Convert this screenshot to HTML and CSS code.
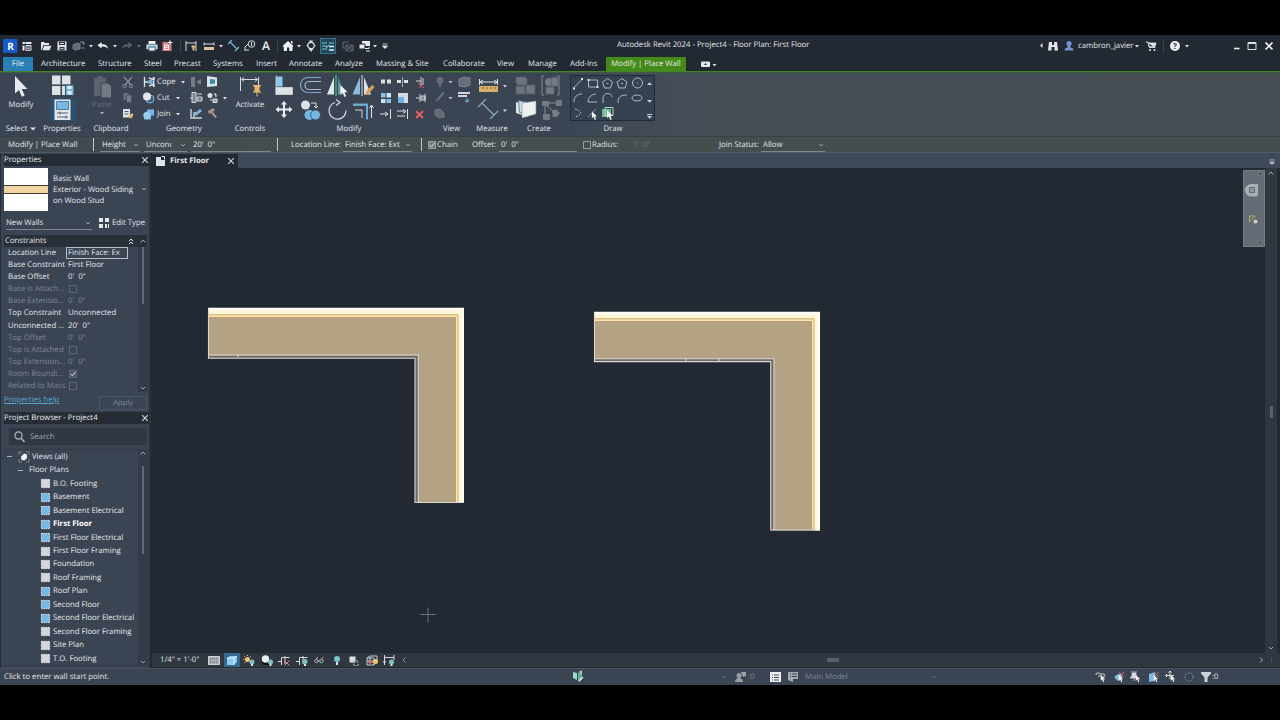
FILE: index.html
```html
<!DOCTYPE html>
<html lang="en">
<head>
<meta charset="utf-8">
<title>Autodesk Revit 2024</title>
<link rel="stylesheet" href="styles.css">
</head>
<body>
<svg class="defs" width="0" height="0">
  <defs>
    <symbol id="caret" viewBox="0 0 6 14"><path d="M1 6h4L3 8.5z" fill="#dfe3e8"/></symbol>
    <symbol id="chev" viewBox="0 0 8 8"><path d="M2 3l2 2 2-2" fill="none" stroke="#9aa3ad" stroke-width="1"/></symbol>
    <symbol id="chevup" viewBox="0 0 8 8"><path d="M1.5 5.5L4 3l2.5 2.5" fill="none" stroke="#a4acb6" stroke-width="1"/></symbol>
    <symbol id="close" viewBox="0 0 8 8"><path d="M1.2 1.2l5.6 5.6M6.8 1.2L1.2 6.8" stroke="#d5d9de" stroke-width="1.1"/></symbol>
    <symbol id="cursor" viewBox="0 0 8 10"><path d="M1 0v8l2-1.6L4.3 10l1.5-.7L4.4 6H7z" fill="#f1f3f5"/></symbol>
    <symbol id="plan" viewBox="0 0 12 12"><rect x="1.5" y="1.5" width="9" height="9" fill="currentColor" stroke="#e9edf0" stroke-width="1" stroke-dasharray="1.5 .8"/></symbol>
    <symbol id="box" viewBox="0 0 8 8"><path d="M.5.5h7v7h-7z" fill="none" stroke="currentColor" stroke-width=".8"/></symbol>
    <symbol id="checked" viewBox="0 0 8 8"><path d="M.5.5h7v7h-7z" fill="currentColor" fill-opacity=".45" stroke="currentColor" stroke-width=".8"/><path d="M1.7 4l1.7 1.7 3-3.6" fill="none" stroke="#e5e8eb" stroke-width="1"/></symbol>
  </defs>
</svg>
<div class="app">
  <header class="titlebar">
    <div class="qat">
      <svg class="i16" viewBox="3 38 16 16"><rect x="3" y="39" width="14.5" height="14" rx="1" fill="#1858c8"/><text x="7.2" y="49.8" class="logo-r">R</text></svg>
      <svg class="i16" viewBox="0 0 16 16"><path d="M3.5 4h3v2h-3zM3.5 7.500h2v5h-2zM7 4h5.500v2H7z" fill="#e6e9ed"/><path d="M7 7.500h5v4.800H7zM8.300 9h2.400M8.300 10.700h2.400" fill="none" stroke="#e6e9ed"/></svg>
      <svg class="i16" viewBox="0 0 16 16"><path d="M3 12V4h3l1 1h4v2H5.500L3.700 12zM4.500 12.200L6.200 7.800h7.300l-2 4.400z" fill="#e3e7eb"/></svg>
      <svg class="i16" viewBox="0 0 16 16"><path d="M3.500 3.500h9v9h-9z" fill="#dfe3e7"/><path d="M5 4h6v3H5zM5.500 9h5v3.500h-5z" fill="#2a313c"/><path d="M6 5.500h4M6.500 10.700h3" stroke="#dfe3e7"/></svg>
      <svg class="i16" viewBox="0 0 16 16"><path d="M2 7l4-2 3 1v5l-4 1-3-1zM9 4h4v3M10 10h4" fill="#636c77" stroke="#737c87"/></svg>
      <svg class="caret"><use href="#caret"/></svg>
      <svg class="i16" viewBox="0 0 16 16"><path d="M2.500 7.200L6.600 4v2.300c4 0 6.200 1.300 6.500 4.500-1.500-2-3-2.400-6.500-2.400v2.200z" fill="#eceff2"/></svg>
      <svg class="caret"><use href="#caret"/></svg>
      <svg class="i16" viewBox="0 0 16 16"><path d="M13.500 7.200L9.400 4v2.300c-4 0-6.200 1.300-6.500 4.500 1.500-2 3-2.400 6.500-2.400v2.200z" fill="#59616c"/></svg>
      <svg class="caret dim"><use href="#caret"/></svg>
      <svg class="i16" viewBox="0 0 16 16"><path d="M4.500 3h7v3h-7zM2.500 6.500h11v4.700h-11z" fill="#e9ecef"/><path d="M4.800 9h6.400v4H4.800z" fill="#e9ecef" stroke="#39566c"/><path d="M3 8h10" stroke="#62b6e4"/></svg>
      <svg class="i16" viewBox="0 0 16 16"><path d="M2.500 4h6v2h3v7h-9z" fill="#d87883"/><path d="M4.500 7h4v4.500h-4zM4.500 9.200h4" fill="none" stroke="#fff"/><path d="M10 2.500v4M8 4.500h4.500" stroke="#fff" stroke-width="1.200"/></svg>
      <i class="vsep"></i>
      <svg class="i16" viewBox="0 0 16 16"><path d="M3 3v10M13 3v10M3 5h10" stroke="#cdd5dc"/><path d="M8.500 7.500h4v2h-1v3h-2v-3h-1z" fill="#e1bd76"/></svg>
      <svg class="i16" viewBox="0 0 16 16"><path d="M3 4.500v3M13 4.500v3M3 6h10" stroke="#d8dde2"/><path d="M3 9h10v3H3z" fill="#dfc39a"/></svg>
      <svg class="caret"><use href="#caret"/></svg>
      <svg class="i16" viewBox="0 0 16 16"><path d="M4 4l7 7M2 6l4-4M9 13l4-4" stroke="#79bad4" stroke-width="1.100"/></svg>
      <svg class="i16" viewBox="0 0 16 16"><path d="M3 13V9l3-3" fill="none" stroke="#d8dde2"/><circle cx="9.500" cy="6" r="3.300" fill="none" stroke="#d8dde2"/><path d="M9.500 4v4M3 12h4" stroke="#d8dde2"/></svg>
      <svg class="i16" viewBox="0 0 16 16"><text x="4" y="12" class="glyph-a">A</text></svg>
      <i class="vsep"></i>
      <svg class="i16" viewBox="0 0 16 16"><path d="M2.500 8L8 3l5.500 5-1 .8V13H9.300V9.500H7V13H3.800V8.800z" fill="#eef0f2"/><path d="M11 3h1.500v3L11 5z" fill="#eef0f2"/></svg>
      <svg class="caret"><use href="#caret"/></svg>
      <svg class="i16" viewBox="0 0 16 16"><circle cx="8" cy="7.500" r="3.200" fill="none" stroke="#dfe3e7" stroke-width="1.200"/><path d="M3 7.500h2M11 7.500h2M6.300 2.800h3.400L8 4.600zM6 11h4l-2 2.500z" fill="#dfe3e7" stroke="#dfe3e7" stroke-width=".6"/></svg>
      <svg class="i16 on" viewBox="0 0 16 16"><path d="M2 5h5M9 5h5M2 8h5M2 11h5" stroke="#79c2df"/><path d="M9 8.500h5M9 12h5" stroke="#e5f0f4" stroke-width="1.600"/><path d="M6 10l3-3" stroke="#aed7e5"/></svg>
      <svg class="i16" viewBox="0 0 16 16"><path d="M3 4h6M3 4v6h3M6 7h7v6H6zM7 8l5 4M12 8l-5 4" fill="none" stroke="#5a626c" stroke-width="1.200"/></svg>
      <svg class="i16" viewBox="0 0 16 16"><path d="M5 3h8v5H5z" fill="#e7eaed"/><path d="M2 6h6v5H2z" fill="#e7eaed" stroke="#242b35"/><path d="M8 10.500h4V9M9 13h4" fill="none" stroke="#e7eaed"/></svg>
      <svg class="caret"><use href="#caret"/></svg>
      <svg class="i16" viewBox="0 0 16 16"><path d="M2.500 6h5M2.500 8h5L5 10.500z" fill="#e7eaed" stroke="#e7eaed" stroke-width=".8"/></svg>
    </div>
    <div class="wintitle">Autodesk Revit 2024 - Project4 - Floor Plan: First Floor</div>
    <div class="account">
      <svg class="i16" viewBox="0 0 16 16"><path d="M9.500 5v5L7 7.500z" fill="#dfe3e7"/></svg>
      <svg class="i16" viewBox="0 0 16 16"><path d="M4 4h3v3h2V4h3l1 8.500H9.500V9h-3v3.500H3z" fill="#e3e7eb"/></svg>
      <svg class="i16" viewBox="0 0 16 16"><circle cx="8" cy="5.500" r="2.600" fill="#7293d8"/><path d="M3.500 12.500c0-2 1.500-2.700 3.200-3V8h2.600v1.500c1.700.3 3.200 1 3.200 3z" fill="#7293d8"/></svg>
      <span>cambron_javier</span>
      <svg class="caret"><use href="#caret"/></svg>
      <svg class="i16" viewBox="0 0 16 16"><path d="M3 4h2l1.500 5.500h6M5.500 5h7.500l-1 3.300-6 .7z" fill="#e3e7eb" stroke="#e3e7eb" stroke-width=".8"/><circle cx="7" cy="12" r="1" fill="#e3e7eb"/><circle cx="11.500" cy="12" r="1" fill="#e3e7eb"/></svg>
      <i class="vsep"></i>
      <svg class="i16" viewBox="0 0 16 16"><circle cx="8" cy="8" r="5" fill="#edf0f3"/><text x="6" y="11" class="glyph-q">?</text></svg>
      <svg class="caret"><use href="#caret"/></svg>
      <svg class="i16" viewBox="0 0 16 16"><path d="M5 10.500h5.500" stroke="#edf0f3" stroke-width="1.600"/></svg>
      <svg class="i16" viewBox="0 0 16 16"><path d="M4 4.500h8v7H4zM4 5.500h8" fill="none" stroke="#dce0e4"/></svg>
      <svg class="i16" viewBox="0 0 16 16"><path d="M4.500 4.500l7 7M11.500 4.500l-7 7" stroke="#f4f5f6" stroke-width="1.700"/></svg>
    </div>
  </header>

  <nav class="tabs">
    <span class="file">File</span><span>Architecture</span><span>Structure</span><span>Steel</span><span>Precast</span><span>Systems</span><span>Insert</span><span>Annotate</span><span>Analyze</span><span>Massing &amp; Site</span><span>Collaborate</span><span>View</span><span>Manage</span><span>Add-Ins</span><span class="active">Modify | Place Wall</span>
    <svg width="20" height="14" viewBox="0 0 20 14"><rect x="3" y="4.500" width="9" height="5.500" rx="1" fill="#e3e7eb"/><path d="M6 8l1.500-2L9 8z" fill="#28303a"/><path d="M14.500 7h4l-2 2.300z" fill="#e3e7eb"/></svg>
  </nav>

  <section class="ribbon">
    <div class="panel">
      <div class="big"><svg width="38" height="25" viewBox="2 73 38 25"><path d="M15 75v17.500l4-3.500 2.800 6.800 2.900-1.300-2.900-6.500h5.500z" fill="#e6eaed"/></svg><b>Modify</b></div>
      <h4>Select <svg width="6" height="6"><path d="M0 1.500h6L3 4.500z" fill="#dfe3e7"/></svg></h4>
    </div>
    <div class="panel">
      <svg width="44" height="49" viewBox="40 73 44 49"><rect x="50" y="97" width="26" height="23" fill="#2c5170"/><path d="M52 74.500h8.500v9H52zM62 74.500h8.500v9H62zM52 85h8.500v9H52zM62 85h7v9h-7z" fill="#dfe2e5"/><path d="M65 83.500h8.500v11H65z" fill="#2d5873"/><path d="M66 84.500h7.500v9.500H66z" fill="#79b5d8"/><path d="M67.500 85h4v3h-4zM67.500 90h4v3.500h-4z" fill="#e7edf1"/><path d="M54.500 98.500h16v20.500h-16z" fill="#e4e8ea"/><path d="M56.500 100.500h12v8h-12z" fill="#75b9e2" stroke="#386986" stroke-width=".8"/><path d="M57 112h11M57 116h11M60 110.500v3M66 114.500v3" stroke="#52606c"/></svg>
      <h4>Properties</h4>
    </div>
    <div class="panel">
      <div class="split clip">
        <div class="big off"><svg width="36" height="25" viewBox="84 73 36 25"><path d="M94 77h3l1-2h4l1 2h3v18H94z" fill="#5b636e"/><path d="M101 82h7l3.500 3.500V97H101z" fill="#737a83" stroke="#3b4453"/></svg><b>Paste</b><svg class="under" width="6" height="5"><path d="M1 1h4L3 3.500z" fill="#aeb4bc"/></svg></div>
        <svg width="18" height="49" viewBox="120 73 18 49"><path d="M124 76l7 8M132 76l-7 8" stroke="#858c95" stroke-width="1.300"/><circle cx="124.500" cy="85" r="1.700" fill="none" stroke="#858c95"/><circle cx="131" cy="85" r="1.700" fill="none" stroke="#858c95"/><path d="M123.500 92h5v7h-5z" fill="#666e79"/><path d="M126.500 94h5v7.500h-5z" fill="#747c86" stroke="#3b4453" stroke-width=".6"/><path d="M123 108h7v8.500h-7z" fill="#dfe3e6"/><path d="M124.500 110.500h4M124.500 113h4" stroke="#56616d"/><path d="M128 116l4-4 1.500 1.500-2 4z" fill="#d9c06f"/></svg>
      </div>
      <h4>Clipboard</h4>
    </div>
    <div class="panel">
      <div class="split geo">
        <svg width="19" height="49" viewBox="137 73 19 49"><path d="M143.500 76v10M143.500 81h4M148 77l5 2v-3M148 85l5-2v3M152.500 76v10" stroke="#dce2e6" stroke-width="1.400" fill="none"/><path d="M147.500 79h4v4h-4z" fill="#73b4dc"/><circle cx="149" cy="98" r="4" fill="#3b5c76" stroke="#77b7dc"/><circle cx="146" cy="95.500" r="4" fill="#e4e8eb"/><path d="M143 112h3v-3.500h7v6h-3v4h-7z" fill="#75b8e4"/><circle cx="146" cy="114.500" r="3.700" fill="#98ccec"/></svg>
        <div class="drops"><span>Cope</span><svg class="caret"><use href="#caret"/></svg><span>Cut</span><svg class="caret near"><use href="#caret"/></svg><span>Join</span><svg class="caret near"><use href="#caret"/></svg></div>
        <svg width="44" height="49" viewBox="186 73 44 49"><path d="M191 76h4v10h-4zM201 78l-5 3 5 3z" fill="#747c86"/><path d="M207 75l10 1.500v8.500l-10 1z" fill="#dce4e9"/><path d="M210 78l5 .5v4l-5 .5z" fill="#398cad"/><path d="M192 91.500h4v10h-4zM197 93h5M197 96h5v4h-5zM190 97h3" stroke="#cfd5da" fill="#7b858f"/><circle cx="210" cy="94.500" r="2.500" fill="#dce2e6"/><path d="M210 99h2M213 98h4v3.500h-4zM214 93h2v3" stroke="#dce2e6" fill="#92a4b0"/><path d="M223 96h4l-2 2.500z" fill="#dce2e6"/><path d="M191 108v9h11M194 117v-5h3" stroke="#cbd4da" stroke-width="1.400" fill="none"/><path d="M194 113l6-5 2 2-6 5z" fill="#79b6df"/><path d="M208 110l5-3 2 2-2 2 4 5-2 1-4-5-2 1z" fill="#a69088"/></svg>
      </div>
      <h4>Geometry</h4>
    </div>
    <div class="panel">
      <div class="big"><svg width="40" height="25" viewBox="230 73 40 25"><path d="M240.500 76v14M258.500 76v8M242 78.500h15M244 76.500l-2.500 2 2.500 2M255 76.500l2.500 2-2.500 2" stroke="#d5dbe1" fill="none"/><path d="M253 84h8v1.500h-1.500v4l2 2h-4v4h-1v-4h-4l2-2v-4H253z" fill="#e4b66c"/></svg><b>Activate</b></div>
      <h4>Controls</h4>
    </div>
    <div class="panel">
      <svg width="158" height="49" viewBox="270 73 158 49">
        <path d="M276 75.500h6.500v10H276z" fill="#8bc7ea"/><path d="M276 86.500h16.500v7H276zM276 74.500v19.500" fill="#dce1e5" stroke="#dce1e5" stroke-width=".7"/>
        <path d="M321 76.500h-13a7.500 7.500 0 0 0 0 15h13" fill="none" stroke="#7fa6c6" stroke-width="1.200"/><path d="M321 80.500h-12a4 4 0 0 0 0 8h12" fill="none" stroke="#aab7c4" stroke-width="1.200"/>
        <path d="M334 76v17.500h-7z" fill="#e3e7e9"/><path d="M336 74v21" stroke="#45af68" stroke-width="1.500"/><path d="M338 76v17.500h6.500z" fill="#5f8faf"/><use href="#cursor" x="339" y="84" width="10" height="12"/>
        <path d="M360 76v17.500h-7.500z" fill="#88bee2"/><path d="M362 74v21" stroke="#d8dee3"/><path d="M364 76v17.500h7z" fill="#dce1e5"/><path d="M366 91l6-7 2.500 2-6 7-3 1z" fill="#dc9f52"/>
        <path d="M284 100l3 3.500h-2v4h4v-2l3.500 3-3.500 3v-2h-4v4h2l-3 3.500-3-3.500h2v-4h-4v2l-3.500-3 3.500-3v2h4v-4h-2z" fill="#e9edf0"/>
        <circle cx="305.500" cy="104" r="4.500" fill="#dce1e5"/><path d="M311 102h5v5M314 105l2 2 2-2" fill="none" stroke="#dce1e5"/><circle cx="309.500" cy="114" r="5" fill="#74b8e2"/><circle cx="315.500" cy="114" r="5" fill="#74b8e2" stroke="#3b4453" stroke-width=".8"/>
        <path d="M335 101.500a8.500 8.500 0 1 0 11 8M336 98.500l4 3-4 3" fill="none" stroke="#d5dbe1" stroke-width="1.200"/>
        <path d="M353 104h13M355 109h7v8" fill="none" stroke="#d0d8de"/><path d="M353 103.500h14v15" fill="none" stroke="#68aed8" stroke-width="2"/><path d="M371.500 117v-12M369.500 107l2-3 2 3" stroke="#e1e5e8" fill="none"/>
        <path d="M381 78.500h4v4h-4zM387 78.500h4v4h-4zM397 79h4v3h-4zM404 79h4v3h-4z" fill="#dbe1e5"/><path d="M402.500 76v10" stroke="#9eabb5"/><path d="M416 80h5M421 76v9M423 77v7" stroke="#cbd1d6"/><path d="M418 82l6 5M424 82l-5 5" stroke="#dc5c69"/>
        <path d="M381 92h4.500v4.500H381zM386.500 98h4.500v4h-4.500z" fill="#83c3eb"/><path d="M386.500 92h4.500v4.500h-4.500zM381 98h4.500v4H381z" fill="#cae5f4"/><path d="M398 92h10v10h-10z" fill="#d3dde3"/><path d="M398 96h6v6h-6z" fill="#69b4e2"/><path d="M416 97h4M420 93v8M421 95h4v4h-4zM425 93v8" stroke="#cbd1d6" fill="#748493"/>
        <path d="M380 113h8M385 111l3 2-3 2M390.500 108v10M397 110h8M397 115h8M403 108.500l3 2-3 2M407.500 108v10" stroke="#dbe1e5" fill="none"/><path d="M416 110l7 7M423 110l-7 7" stroke="#eb5f5b" stroke-width="1.800"/>
      </svg>
      <h4>Modify</h4>
    </div>
    <div class="panel">
      <svg width="47" height="49" viewBox="428 73 47 49"><circle cx="440" cy="79.500" r="3.500" fill="#646d78"/><path d="M439 83h2v3h-2z" fill="#646d78"/><path d="M448.500 80h4l-2 2.500zM448.500 96h4l-2 2.500z" fill="#b9c0c8"/><path d="M459 78l5-2 6 1v7l-5 2-6-1z" fill="#656e79" stroke="#7a828c"/><path d="M435 101l2-3 6-7 1.500 1-6 7z" fill="#707882"/><path d="M458 92h12M458 95h9" stroke="#cfd6dc" stroke-width="1.800"/><path d="M467 97v4M465 99l2 2.500 2-2.500" stroke="#6dbbe5" fill="none"/><path d="M435 109l5-1 4 4v4l-5 1-4-3z" fill="#606974" stroke="#737b86"/></svg>
      <h4>View</h4>
    </div>
    <div class="panel">
      <svg width="34" height="49" viewBox="475 73 34 49"><path d="M479.500 78v6M497.500 78v6M480 81h17M483 79l-3 2 3 2M494 79l3 2-3 2" stroke="#dfe4e8" fill="none"/><path d="M479 85h19v6h-19z" fill="#d9ae68"/><path d="M483 86v2M487 86v2M491 86v2M495 86v2" stroke="#7c6239"/><path d="M482 102l12 12M478 106l8-8M490 118l8-8" stroke="#85a9c0" stroke-width="1.200"/><path d="M503 84h4l-2 2.500zM503 108.500h4l-2 2.500z" fill="#cfd5db"/></svg>
      <h4>Measure</h4>
    </div>
    <div class="panel">
      <svg width="60" height="49" viewBox="509 73 60 49"><path d="M516 76h9l2 2v6h-9l-2-2zM516 85h9v8h-9zM526 84h9v9h-9z" fill="#6d747d" stroke="#535c68" stroke-width=".7"/><path d="M544 75h-2v19h2M557 75h2v19h-2" stroke="#848b94" fill="none"/><circle cx="549" cy="81" r="4" fill="#737a83"/><path d="M551 77l5-1 2 2v7h-7zM546 86h8v7h-8z" fill="#737a83" stroke="#566"/><path d="M516 101l12 3v12l-12-4z" fill="#dfe4e8"/><path d="M518.500 99.500l14 3v11l-13-2z" fill="#c8e1e8" stroke="#527181" stroke-width=".8"/><path d="M522 102l14 -2v13l-14 4z" fill="#eef0ef" stroke="#7a8994" stroke-width=".6"/><path d="M542 100h7v5h-7zM556 99h6v6h-6zM543 113h7v6h-7zM552 110l4-2 4 4-3 4h-4z" fill="#737a83"/><path d="M549 102h7M545 105v8M547 105l9 8" stroke="#858c95"/></svg>
      <h4>Create</h4>
    </div>
    <div class="panel">
      <svg width="88" height="49" viewBox="569 73 88 49"><path d="M570.500 74.500h84v45h-84z" fill="#354150" stroke="#202b39"/>
        <g fill="none" stroke="#bac4ce" stroke-width=".9"><path d="M573.500 87l9-9M588.500 79h9v7h-9zM607.500 77.500l5 3.500-2 6h-6l-2-6zM622 77.500l5 3.500-2 6h-6l-2-6z"/><circle cx="637.500" cy="82" r="5"/><path d="M637 82h1M606.500 82.500h2M621 82.500h2"/><path d="M574 101c0-5 3-8 8-8M588 101c0-5 4-8 8-8M588 101h9M603 102v-4c0-7 8-7 9-2M618 102c0-6 2-8 9-8"/><ellipse cx="637" cy="97" rx="5" ry="3"/><path d="M575 108l3 1 3 3-3 3-3 1M588 116l8-8" stroke-dasharray="2 1"/></g>
        <path d="M573 86.500h2v2h-2zM581 77h2v2h-2zM587.500 78h2v2h-2zM596.500 85h2v2h-2z" fill="#dce3e8"/><use href="#cursor" x="591" y="110" width="7" height="9"/><path d="M602 108h9v8h-9z" fill="#68b88c"/><path d="M605 106.500h8v8h-8z" fill="none" stroke="#aeddb9"/><use href="#cursor" x="606" y="109" width="8" height="10"/><path d="M647 84h5l-2.500-2.800zM647 99h5l-2.500 2.800zM647 115h5l-2.500 2.800zM647 113h5v1h-5z" fill="#c9d0d6"/></svg>
      <h4>Draw</h4>
    </div>
  </section>

  <section class="options">
    <span>Modify | Place Wall</span><i class="bar"></i>
    <span class="field">Height <svg class="cv"><use href="#chev"/></svg></span>
    <span class="field">Unconı <svg class="cv"><use href="#chev"/></svg></span>
    <span class="field">20'&nbsp; 0"</span><i class="bar"></i>
    <span>Location Line:</span><span class="field loc">Finish Face: Ext <svg class="cv"><use href="#chev"/></svg></span><i class="bar"></i>
    <span class="chk"><svg class="cv"><use href="#checked"/></svg>Chain</span>
    <span>Offset:</span><span class="field">0'&nbsp; 0"</span>
    <span class="chk"><svg class="cv"><use href="#box"/></svg>Radius:</span><span class="field mute">1'&nbsp; 0"</span>
    <span>Join Status:</span><span class="field">Allow <svg class="cv"><use href="#chev"/></svg></span>
  </section>

  <main class="work">
    <aside class="side">
      <div class="head"><span>Properties</span><svg class="cv"><use href="#close"/></svg></div>
      <div class="type">
        <svg width="44" height="45" viewBox="0 0 44 45"><path d="M0 1h44v43H0z" fill="#fff"/><path d="M0 18h44v9H0z" fill="#463e36"/><path d="M0 19h44v7H0z" fill="#f0d5a2"/></svg>
        <p>Basic Wall<br>Exterior - Wood Siding<br>on Wood Stud</p>
        <svg class="cv"><use href="#chev"/></svg>
      </div>
      <div class="filter"><span class="field">New Walls <svg class="cv"><use href="#chev"/></svg></span><svg width="12" height="12" viewBox="0 0 12 12"><path d="M1 1h4v4H1zM7 1h4v4H7zM1 7h4v4H1zM7 7h2v4H7zM10 7h1v4h-1z" fill="#e1e5e8"/></svg><span>Edit Type</span></div>
      <div class="group"><span>Constraints</span><svg class="cv"><path d="M2 4l2-2 2 2M2 7l2-2 2 2" stroke="#e1e5e8" fill="none"/></svg><svg class="cv"><use href="#chevup"/></svg></div>
      <div class="props">
        <div class="grid">
          <span>Location Line</span><span class="edit">Finish Face: Ex</span>
          <span>Base Constraint</span><span>First Floor</span>
          <span>Base Offset</span><span>0'&nbsp; 0"</span>
          <span class="mute">Base is Attach...</span><span class="mute"><svg class="cv"><use href="#box"/></svg></span>
          <span class="mute">Base Extensio...</span><span class="mute">0'&nbsp; 0"</span>
          <span>Top Constraint</span><span>Unconnected</span>
          <span>Unconnected ...</span><span>20'&nbsp; 0"</span>
          <span class="mute">Top Offset</span><span class="mute">0'&nbsp; 0"</span>
          <span class="mute">Top is Attached</span><span class="mute"><svg class="cv"><use href="#box"/></svg></span>
          <span class="mute">Top Extension...</span><span class="mute">0'&nbsp; 0"</span>
          <span class="mute">Room Boundi...</span><span class="mute"><svg class="cv"><use href="#checked"/></svg></span>
          <span class="mute">Related to Mass</span><span class="mute"><svg class="cv"><use href="#box"/></svg></span>
        </div>
        <div class="scroll"><i class="thumb"></i><svg class="cv"><use href="#chev"/></svg></div>
      </div>
      <div class="help"><a>Properties help</a><span class="apply">Apply</span></div>
      <div class="head"><span>Project Browser - Project4</span><svg class="cv"><use href="#close"/></svg></div>
      <div class="search"><svg width="13" height="13" viewBox="0 0 13 13"><circle cx="5.500" cy="5.500" r="3.600" fill="none" stroke="#aeb6bf" stroke-width="1.200"/><path d="M8 8l3.500 4" stroke="#aeb6bf" stroke-width="1.500"/></svg><span>Search</span></div>
      <div class="browser">
        <div class="tree">
          <div class="node top"><i class="minus"></i><svg width="12" height="12" viewBox="0 0 12 12"><path d="M1 4V1h3M8 1h3v3M11 8v3H8M4 11H1V8" fill="none" stroke="#7d8690"/><path d="M3 5.500l3-3 3 1v3.500L6.500 9.500 3.500 9z" fill="#f0f2f4"/></svg><span>Views (all)</span></div>
          <div class="node sub"><i class="minus"></i><span>Floor Plans</span></div>
          <div class="node leaf"><svg class="ic"><use href="#plan"/></svg><span>B.O. Footing</span></div>
          <div class="node leaf blue"><svg class="ic"><use href="#plan"/></svg><span>Basement</span></div>
          <div class="node leaf blue"><svg class="ic"><use href="#plan"/></svg><span>Basement Electrical</span></div>
          <div class="node leaf blue"><svg class="ic"><use href="#plan"/></svg><strong>First Floor</strong></div>
          <div class="node leaf blue"><svg class="ic"><use href="#plan"/></svg><span>First Floor Electrical</span></div>
          <div class="node leaf"><svg class="ic"><use href="#plan"/></svg><span>First Floor Framing</span></div>
          <div class="node leaf"><svg class="ic"><use href="#plan"/></svg><span>Foundation</span></div>
          <div class="node leaf"><svg class="ic"><use href="#plan"/></svg><span>Roof Framing</span></div>
          <div class="node leaf blue"><svg class="ic"><use href="#plan"/></svg><span>Roof Plan</span></div>
          <div class="node leaf blue"><svg class="ic"><use href="#plan"/></svg><span>Second Floor</span></div>
          <div class="node leaf blue"><svg class="ic"><use href="#plan"/></svg><span>Second Floor Electrical</span></div>
          <div class="node leaf"><svg class="ic"><use href="#plan"/></svg><span>Second Floor Framing</span></div>
          <div class="node leaf"><svg class="ic"><use href="#plan"/></svg><span>Site Plan</span></div>
          <div class="node leaf"><svg class="ic"><use href="#plan"/></svg><span>T.O. Footing</span></div>
        </div>
        <div class="scroll"><svg class="cv"><use href="#chevup"/></svg><i class="thumb"></i><svg class="cv"><use href="#chev"/></svg></div>
      </div>
    </aside>

    <section class="doc">
      <div class="doctabs"><div class="doctab"><svg width="12" height="12" viewBox="0 0 12 12"><path d="M1 2h5v3h4v6H1z" fill="#dfe3e7"/><path d="M6.500 1.500h3v3" fill="none" stroke="#dfe3e7"/></svg><strong>First Floor</strong><svg class="cv"><use href="#close"/></svg></div><svg class="cv"><path d="M1 3h6M1.500 5h5L4 7.500z" fill="#bcc4cc" stroke="#bcc4cc" stroke-width=".7"/></svg></div>
      <div class="view">
        <svg class="canvas" width="1113" height="485" viewBox="152 168 1113 485">
          <g>
            <path d="M208 308.500H464V503H415V358H208z" fill="#b3a284"/>
            <path d="M208 311H461V503" fill="none" stroke="#fff6d9" stroke-width="6"/>
            <path d="M462.500 308.500V503M208 309h256" stroke="#fffdf3" stroke-width="2.500"/>
            <path d="M208 315.500H457V503" fill="none" stroke="#e8cf97" stroke-width="3"/>
            <path d="M208 317.500H455.300V503" fill="none" stroke="#c09d67" stroke-width="1"/>
            <path d="M208 314.500H458V503" fill="none" stroke="#d7bf7c" stroke-width=".8"/>
            <path d="M209 316.500H456.500V503" fill="none" stroke="#fff0c5" stroke-width=".7"/>
            <path d="M208 357H416.500V503" fill="none" stroke="#6c6b69" stroke-width="3"/>
            <path d="M208 355H418.300V502.500M208 358.300H415V502.500H464M208.500 309v49M238 355v2" fill="none" stroke="#d8d5cf" stroke-width="1.100"/>
          </g>
          <g>
            <path d="M594 312H820V530.500H771V361.500H594z" fill="#b3a284"/>
            <path d="M594 315H817V530.500" fill="none" stroke="#fff6d9" stroke-width="6"/>
            <path d="M818.500 312V530.500M594 313h226" stroke="#fffdf3" stroke-width="2.500"/>
            <path d="M594 319.500H813V530" fill="none" stroke="#e8cf97" stroke-width="3"/>
            <path d="M594 321.500H811.500V530" fill="none" stroke="#c09d67" stroke-width="1"/>
            <path d="M594 318.500H814V530" fill="none" stroke="#d7bf7c" stroke-width=".8"/>
            <path d="M595 320.500H812.500V530" fill="none" stroke="#fff0c5" stroke-width=".7"/>
            <path d="M594 360.300H772.300V530" fill="none" stroke="#6c6b69" stroke-width="3"/>
            <path d="M594 358.700H774V530M594 361.600H770.700V530H820M594.500 313v49M686 358v3M719 358v3" fill="none" stroke="#d8d5cf" stroke-width="1.100"/>
          </g>
          <path d="M420.500 614.500h15M428 607.500v15" stroke="#747b85" stroke-width=".9"/>
          <path d="M1243 170h22v76h-22z" fill="#656b74"/><path d="M1243.500 170.500h21v76h-21z" fill="none" stroke="#787e86"/><path d="M1256 184h2v11l-2 1.500h-4a6.300 6.300 0 1 1 0-12.500z" fill="#a9aeb7"/><path d="M1249.500 187.500h5v5h-5z" fill="#9298a0" stroke="#62686f"/><path d="M1249.500 222v-6h6l-6 6" fill="none" stroke="#a7ad62"/><circle cx="1255.500" cy="221.500" r="2" fill="#cfd1b0"/><circle cx="1260.500" cy="174" r="1.800" fill="#454b55" stroke="#8d939b" stroke-width=".6"/><circle cx="1260.500" cy="242.500" r="1.800" fill="#454b55" stroke="#8d939b" stroke-width=".6"/>
        </svg>
        <div class="vscroll"><svg class="cv"><use href="#chevup"/></svg><i class="thumb"></i><svg class="cv"><use href="#chev"/></svg></div>
      </div>
      <div class="viewbar">
        <span>1/4" = 1'-0"</span>
        <svg class="i16" viewBox="0 0 16 14"><path d="M2.500 3.500h11v8h-11z" fill="#a8aeb4" stroke="#d0d4d8"/><path d="M4 6h8M4 9h8" stroke="#596571" stroke-dasharray="1 1"/></svg>
        <svg class="i16 lit" viewBox="0 0 16 14"><path d="M3 5l3-2h7v6l-3 3H3z" fill="#8dcaf1"/><path d="M3 5h7v7M10 5l3-2" fill="none" stroke="#e8f5fc"/></svg>
        <svg class="i16" viewBox="0 0 16 14"><circle cx="6.500" cy="6.500" r="2.500" fill="#edc87a"/><path d="M6.500 2v1M2 6.500h1M3.300 3.300l.9.900M9.700 3.300l-.9.900M3.500 10l.9-.9" stroke="#edc87a"/><circle cx="11" cy="9" r="2.500" fill="#80c1c2"/><path d="M10 11h2v2h-2z" fill="#d8ddd9"/></svg>
        <svg class="i16" viewBox="0 0 16 14"><ellipse cx="7.500" cy="9.500" rx="5" ry="2.500" fill="#080c10"/><circle cx="6.500" cy="6" r="3.700" fill="#eceee9"/><circle cx="11.500" cy="9" r="2.500" fill="#80c1c2"/><path d="M10.500 11h2v2h-2z" fill="#d8ddd9"/></svg>
        <svg class="i16" viewBox="0 0 16 14"><path d="M2 8.500h3M5.500 12V4.500h8M9 3v8" stroke="#d7dbdf" fill="none"/><path d="M8.500 7.500l5 5M13.500 7.500l-5 5" stroke="#d67987"/></svg>
        <svg class="i16" viewBox="0 0 16 14"><path d="M2 8.500h3M5.500 12V4.500h8M9 3v8" stroke="#d7dbdf" fill="none"/><circle cx="11" cy="8.500" r="2.500" fill="#80c1c2"/><path d="M10 11h2v2h-2z" fill="#d8ddd9"/></svg>
        <svg class="i16" viewBox="0 0 16 14"><path d="M5 6l2-2M10.500 6l2-2M7 8h2" stroke="#aeb5bc" fill="none"/><circle cx="5.500" cy="8" r="1.700" fill="none" stroke="#aeb5bc"/><circle cx="10.500" cy="8" r="1.700" fill="none" stroke="#aeb5bc"/></svg>
        <svg class="i16" viewBox="0 0 16 14"><circle cx="8" cy="6" r="3" fill="#70c5d0"/><path d="M7 9h2v3H7z" fill="#ccebed"/></svg>
        <svg class="i16" viewBox="0 0 16 14"><path d="M3.500 3.500h6v6h-6z" fill="#dde2e5"/><path d="M7.500 7.500h4l1 5M7.500 8v4.500h5" stroke="#aab3bb" fill="none" stroke-dasharray="1.500 1"/></svg>
        <svg class="i16" viewBox="0 0 16 14"><path d="M3 5l3-2h7v6l-3 3H3zM3 5h7v7M3 8h10M6 4v7" fill="none" stroke="#c5c9ce"/><path d="M4 9h5" stroke="#c76d7c" stroke-width="2"/><circle cx="11.500" cy="8.500" r="2.500" fill="#eac874"/></svg>
        <svg class="i16" viewBox="0 0 16 14"><path d="M3.500 2v10M13 2v5M3.500 4.500H13M2 9h3" fill="none" stroke="#d7dbdf"/><circle cx="10.500" cy="9" r="2.500" fill="#80c1c2"/><path d="M9.500 11h2v2h-2z" fill="#d8ddd9"/></svg>
        <svg class="i16" viewBox="0 0 16 14"><path d="M6.500 4.500L4 7l2.500 2.500" fill="none" stroke="#8f98a1"/></svg>
        <i class="hthumb"></i>
        <svg class="i16" viewBox="0 0 16 14"><path d="M4 4.500L6.500 7 4 9.500" fill="none" stroke="#aeb6be"/><path d="M15 9h1M15 6h1" stroke="#727a84"/></svg>
      </div>
    </section>
  </main>

  <footer class="status">
    <span>Click to enter wall start point.</span>
    <svg class="i16" viewBox="0 0 16 16"><path d="M3 3l4 1v7l-4-2z" fill="#9bd9cc"/><path d="M8 4l4-2v9l-4 2z" fill="#5bb6aa"/><path d="M9 2.500l3-1v4" fill="#dbc97e"/><path d="M9 12l4-4" stroke="#e7ece9" stroke-width="1.500"/></svg>
    <svg class="cv dim"><use href="#chev"/></svg>
    <svg class="i16" viewBox="0 0 16 16"><circle cx="6" cy="6.500" r="2.500" fill="#999fa8"/><path d="M2 13c0-3 2-4 4-4s4 1 4 4zM8 3h5v4l-3 1z" fill="#999fa8"/></svg><span class="mute num">:0</span>
    <svg class="i16" viewBox="0 0 16 16"><path d="M3 3h11v10H3z" fill="#eef0f2"/><path d="M5 6h1M5 8.500h1M5 11h1M7 6h5M7 8.500h5M7 11h5" stroke="#39424f"/></svg>
    <svg class="i16" viewBox="0 0 16 16"><path d="M3 3h10v7H8v3l-5-2z" fill="#a4aab2"/><path d="M5 5h1M7 5h5M5 7.500h1M7 7.500h5" stroke="#3b4453"/></svg>
    <span class="mute">Main Model</span>
    <svg class="cv dim"><use href="#chev"/></svg>
    <svg class="i16" viewBox="0 0 16 16"><path d="M3 6a2 1.500 0 0 1 4-1h3a2 1.500 0 1 1 0 3M5 7h4" fill="none" stroke="#cbd1d6"/><use href="#cursor" x="7" y="5" width="6" height="9"/></svg>
    <svg class="i16" viewBox="0 0 16 16"><path d="M3 8l4-3h4v5l-4 2z" fill="#80bfde"/><path d="M8 3l5 5M13 3L8 8" stroke="#c6717d"/><use href="#cursor" x="7" y="5" width="6" height="9"/></svg>
    <svg class="i16" viewBox="0 0 16 16"><path d="M3 3h6M4 4h4v3l2 2H2l2-2zM6 9v3" fill="#d5dade" stroke="#d5dade" stroke-width=".7"/><use href="#cursor" x="7" y="5" width="6" height="9"/></svg>
    <svg class="i16" viewBox="0 0 16 16"><path d="M3 5l6-2v9l-6 1z" fill="#7bbae1"/><path d="M8 3l5 5M13 3L8 8" stroke="#c6717d"/><use href="#cursor" x="7" y="5" width="6" height="9"/></svg>
    <svg class="i16" viewBox="0 0 16 16"><path d="M7 2v8M3 6.500h8M5.500 3.500L7 2l1.500 1.500M4 5L2.500 6.500 4 8" fill="none" stroke="#d8dee3"/><use href="#cursor" x="7" y="5" width="6" height="9"/></svg>
    <svg class="i16" viewBox="0 0 16 16"><circle cx="8" cy="8" r="4.200" fill="none" stroke="#99a1aa" stroke-dasharray="1.500 1.500"/></svg>
    <svg class="i16" viewBox="0 0 16 16"><path d="M3 3h10v1.500L9.500 8.500V13h-3V8.500L3 4.500z" fill="#cbd4da"/></svg><span>:0</span>
  </footer>
</div>
</body>
</html>
```
FILE: styles.css
```css
* { box-sizing: border-box; }
body {
  margin: 0;
  background: #000;
  color: #e3e7eb;
  font: 7.75px/12px "Open Sans", "Noto Sans", sans-serif;
  text-rendering: geometricPrecision;
}
svg { display: block; flex: none; }
.defs { position: absolute; }
.app {
  width: 1280px;
  height: 720px;
  padding: 35px 0;
  overflow: hidden;
  white-space: nowrap;
  display: flex;
  flex-direction: column;
}
.i16 { width: 16px; height: 16px; }
.cv { width: 8px; height: 8px; }
.caret { width: 6px; height: 14px; }
.dim { opacity: .4; }
.mute { color: #7e8793; }
.vsep { width: 1px; height: 14px; background: #3a424d; }
.logo-r { font: bold 10px "Open Sans", sans-serif; fill: #fff; }
.glyph-a { font: 600 12px "Open Sans", sans-serif; fill: #eef0f2; }
.glyph-q { font: bold 8px "Open Sans", sans-serif; fill: #222933; }

/* Title bar */
.titlebar {
  height: 22px;
  flex: none;
  padding-left: 3px;
  background: #222933;
  display: grid;
  grid-template-columns: 614px 423px 240px;
  align-items: center;
}
.qat {
  display: grid;
  align-items: center;
  grid-template-columns: 16px 19px 16px 17px 17px 7px 17px 7px 17px 8px 16px 20px 3px 18px 17px 8px 16px 16px 19px 3px 16px 7px 17px 20px 17px 15px 8px 16px;
}
.on { background: #234a5c; outline: 1px solid #3a7187; outline-offset: -1px; }
.wintitle { padding-bottom: 3px; }
.account {
  display: grid;
  align-items: center;
  grid-template-columns: 12px 16px 17px 56px 9px 20px 4px 17px 45px 15px 17px 16px;
  margin-left: -7px;
}

/* Ribbon tabs */
.tabs {
  height: 15px;
  flex: none;
  padding-left: 3px;
  background: #222933;
  border-bottom: 1px solid #47822a;
  display: grid;
  line-height: 14px;
  grid-template-columns: 38px 57px 46px 30px 39px 43px 33px 46px 41px 67px 54px 31px 42px 36px 80px 12px 20px;
}
.tabs svg { grid-column: 17; }
.file { width: 30px; background: #2a7fb5; text-align: center; }
.active { background: #438b16; text-align: center; }

/* Ribbon */
.ribbon {
  height: 64px;
  flex: none;
  padding: 1px 0 0 2px;
  border-top: 1px solid #3d5b45;
  background: linear-gradient(90deg, #3b4453 0, #3b4453 560px, #454e56 680px, #474f55 100%);
  display: grid;
  grid-template-columns: 38px 44px 54px 92px 40px 158px 47px 34px 60px 88px;
}
.panel { height: 62px; display: flex; flex-direction: column; }
.panel h4 { margin: -1px 0 0; height: 13px; font-weight: 400; display: flex; justify-content: center; align-items: center; gap: 3px; }
.big { height: 49px; display: flex; flex-direction: column; align-items: center; }
.big b { font-weight: 400; line-height: 12px; }
.big.off { color: #67707b; }
.split { display: grid; height: 49px; }
.clip { grid-template-columns: 36px 18px; }
.geo { grid-template-columns: 19px 29px 44px; }
.drops { display: grid; grid-template-columns: 23px 6px; grid-auto-rows: 16px; align-items: center; }
.near { margin-left: -5px; }

/* Options bar */
.options {
  height: 17px;
  flex: none;
  padding-left: 8px;
  border-top: 1px solid #384047;
  border-bottom: 1px solid #505a62;
  background: linear-gradient(90deg, #3f4750, #444e4f 260px, #444e4f);
  display: grid;
  align-items: center;
  grid-template-columns: 85px 9px 44px 47px 84px 14px 54px 76px 7px 44px 29px 82px 50px 86px 44px 68px;
}
.bar { width: 1px; height: 13px; background: #c4c9cd; }
.field { display: flex; justify-content: space-between; align-items: center; height: 15px; margin-right: 6px; border-bottom: 1px solid #7d868e; }
.options .field { padding-top: 1px; margin-left: -2px; padding-left: 2px; }
.options .loc { margin-right: 9px; }
.field.mute { border-bottom-color: transparent; color: #6d767e; }
.chk { display: flex; align-items: center; gap: 1px; color: #dfe3e7; }
.chk .cv { color: #aab1b8; }

/* Work area */
.work { height: 515px; flex: none; display: grid; grid-template-columns: 152px 1128px; background: #222933; }
.side {
  width: 151px;
  height: 515px;
  padding: 1px 2px 0 3px;
  background: #3b4453;
  border-right: 2px solid #2a313b;
  border-left: 1px solid #252d37;
}
.head { height: 12px; display: flex; justify-content: space-between; align-items: center; background: #252c36; margin-right: -2px; color: #eceef0; }
.type { height: 46px; display: grid; grid-template-columns: 49px 86px 8px; align-items: center; margin-left: 1px; }
.type svg:first-child { margin-left: -1px; }
.type p { margin: 3px 0 0 -1px; line-height: 11px; }
.filter { height: 20px; display: grid; align-items: center; grid-template-columns: 92px 14px 40px; margin-top: 1px; padding-left: 2px; }
.filter .field { height: 14px; }
.group { height: 12px; margin-top: 2px; background: #29303a; display: grid; align-items: center; grid-template-columns: 123px 12px 8px; }
.group span { padding-left: 1px; }
.props { height: 145px; display: grid; grid-template-columns: 136px 8px; }
.grid { display: grid; grid-template-columns: 60px 66px; grid-auto-rows: 12.1px; padding-left: 4px; height: 145px; }
.grid span { height: 12px; display: flex; align-items: center; }
.grid .mute .cv { color: #67717d; margin-left: 1px; }
.grid .edit { width: 62px; height: 12px; border: 1px solid #b7bec6; margin-left: -2px; padding-left: 1px; overflow: hidden; }
.scroll { display: flex; flex-direction: column; justify-content: space-between; background: #343c49; margin-left: -2px; align-items: center; }
.scroll .thumb { width: 2px; height: 57px; background: #606976; }
.help { height: 20px; display: flex; justify-content: space-between; }
.help a { color: #56a5cc; text-decoration: underline; line-height: 17px; }
.apply { width: 48px; height: 14px; margin-top: 4px; border: 1px solid #4a5462; color: #7e8793; text-align: center; }
.search { height: 17px; margin: 4px 0 4px 5px; padding-left: 4px; background: #303844; display: flex; align-items: center; gap: 4px; color: #a0a8b1; }
.browser { height: 217px; display: grid; grid-template-columns: 136px 8px; }
.tree { border-top: 1px solid #333b46; border-bottom: 1px solid #2e3641; height: 217px; overflow: hidden; }
.node { height: 13.48px; display: flex; align-items: center; }
.top { padding-left: 3px; }
.top svg { margin: 0 2px 0 6px; }
.sub { padding-left: 14px; gap: 6px; }
.leaf { padding-left: 36px; gap: 2px; color: #d3d7dc; }
.leaf span { color: #e6e9ec; }
.leaf.blue { color: #76b9e6; }
.leaf strong { color: #fff; }
.ic { width: 11px; height: 11px; }
.minus { width: 5px; height: 1px; background: #a9b1ba; }
.browser .thumb { height: 88px; margin-bottom: 95px; }

/* Drawing view */
.doc { display: grid; grid-template-rows: 15px 485px 15px; }
.doctabs { background: #3f4958; display: flex; justify-content: space-between; align-items: center; padding: 1px 4px 0 0; }
.doctab { width: 86px; height: 14px; background: #222933; display: grid; grid-template-columns: 15px 57px 8px; align-items: center; padding-left: 3px; }
.doctab strong, .leaf strong { font-weight: 700; }
.view { display: grid; grid-template-columns: 1113px 15px; }
.vscroll { width: 12px; height: 485px; padding: 1px 0; background: #303741; display: flex; flex-direction: column; align-items: center; justify-content: space-between; }
.vscroll .thumb { width: 3px; height: 12px; margin-top: 2px; background: #59616c; }
.viewbar {
  height: 14px;
  background: #303740;
  display: grid;
  align-items: center;
  padding-left: 8px;
  grid-template-columns: 46px 17.5px 17.5px 17.5px 17.5px 17.5px 17.5px 17.5px 17.5px 17.5px 17.5px 17.5px 428px 429px 16px;
}
.viewbar .i16 { height: 14px; }
.lit { background: #32698c; }
.hthumb { width: 12px; height: 4px; background: #59616b; }

/* Status bar */
.status {
  height: 17px;
  flex: none;
  padding: 0 0 1px 4px;
  background: #3b4453;
  border-top: 1px solid #4a5361;
  display: grid;
  align-items: center;
  grid-template-columns: 566px 150px 13px 15px 19px 18px 20px 125px 163px 17.5px 17.5px 17.5px 17.5px 17.5px 17.5px 14px 20px;
}
```
